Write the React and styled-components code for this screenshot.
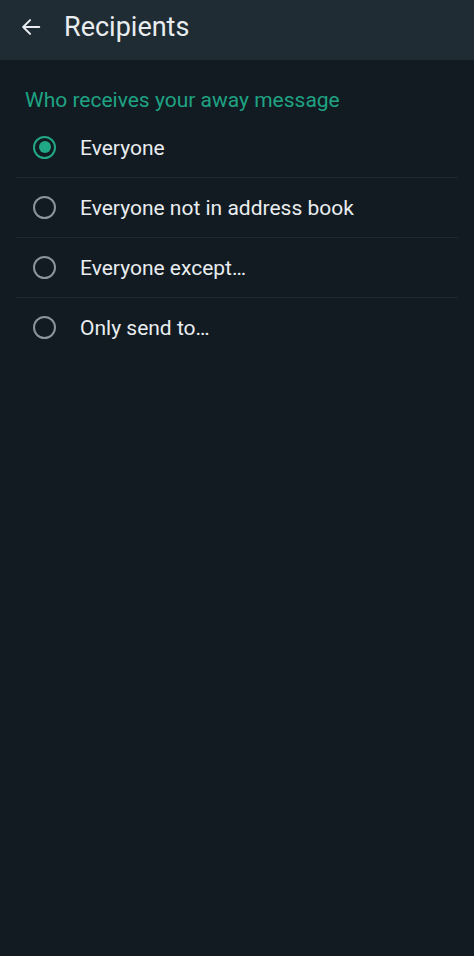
import React, { useState } from "react";
import styled, { createGlobalStyle } from "styled-components";

const Global = createGlobalStyle`
  html, body {
    margin: 0;
    padding: 0;
    background: #121b22;
  }
  body {
    font-family: Roboto, "Noto Sans", "Liberation Sans", sans-serif;
  }
`;

const Page = styled.div`
  min-height: 956px;
  background: #121b22;
  display: flex;
  flex-direction: column;
`;

const Header = styled.div`
  height: 60px;
  background: #1f2c34;
  display: flex;
  align-items: center;
  padding: 0 0 0 18px;
  box-sizing: border-box;
`;

const BackButton = styled.button`
  background: none;
  border: none;
  padding: 0;
  width: 26px;
  height: 26px;
  display: flex;
  align-items: center;
  justify-content: center;
  color: #e9edef;
  margin-top: -6px;
`;

const Title = styled.h1`
  margin: -6px 0 0 20px;
  font-size: 27px;
  font-weight: 400;
  color: #e9edef;
`;

const SectionLabel = styled.div`
  color: #1fa383;
  font-size: 21px;
  padding: 28px 0 0 25px;
  height: 24px;
  line-height: 24px;
`;

const List = styled.div`
  display: flex;
  flex-direction: column;
  padding-top: 6px;
`;

const Row = styled.label`
  display: flex;
  align-items: center;
  height: 59px;
  margin: 0 16px;
  padding-left: 17px;
  border-bottom: 1px solid ${(p) => (p.last ? "transparent" : "#1e2a31")};
  cursor: pointer;
`;

const Radio = styled.span`
  width: 23px;
  height: 23px;
  box-sizing: border-box;
  border-radius: 50%;
  border: 2.5px solid ${(p) => (p.checked ? "#21a886" : "#8a959c")};
  display: flex;
  align-items: center;
  justify-content: center;
  flex-shrink: 0;
  margin-top: -1px;

  &::after {
    content: "";
    width: 12px;
    height: 12px;
    border-radius: 50%;
    background: #21a886;
    display: ${(p) => (p.checked ? "block" : "none")};
  }
`;

const RowText = styled.span`
  margin-left: 24px;
  font-size: 21px;
  color: #e9edef;
`;

const options = [
  "Everyone",
  "Everyone not in address book",
  "Everyone except\u2026",
  "Only send to\u2026",
];

export default function App() {
  const [selected, setSelected] = useState(0);
  return (
    <Page>
      <Global />
      <Header>
        <BackButton aria-label="Back">
          <svg width="22" height="22" viewBox="0 0 24 24" fill="none">
            <path
              d="M21 12H4M11 4.5L3.5 12L11 19.5"
              stroke="currentColor"
              strokeWidth="2.2"
              strokeLinecap="round"
              strokeLinejoin="round"
            />
          </svg>
        </BackButton>
        <Title>Recipients</Title>
      </Header>
      <SectionLabel>Who receives your away message</SectionLabel>
      <List>
        {options.map((o, i) => (
          <Row key={o} last={i === options.length - 1} onClick={() => setSelected(i)}>
            <Radio checked={selected === i} />
            <RowText>{o}</RowText>
          </Row>
        ))}
      </List>
    </Page>
  );
}
